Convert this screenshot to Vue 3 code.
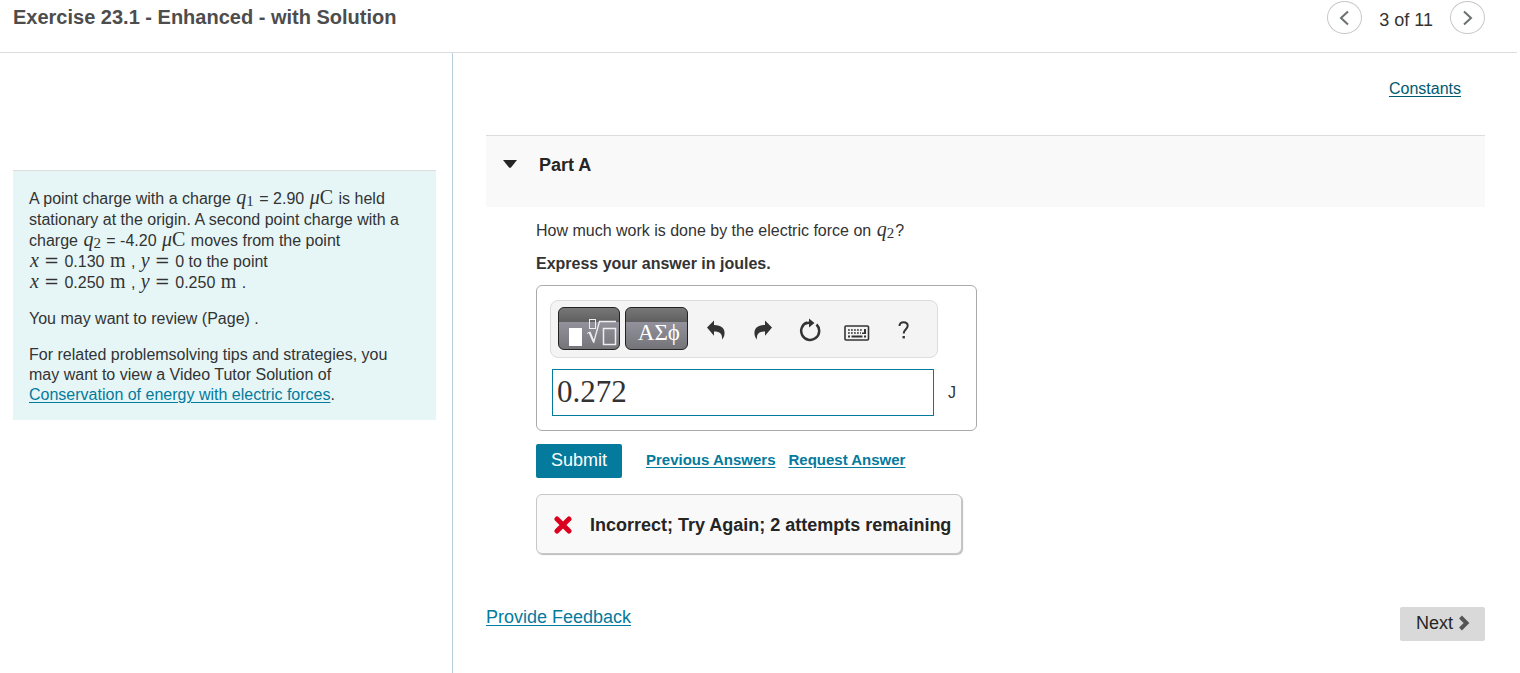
<template>
  <div class="page">
    <header class="top-bar">
      <h1>Exercise 23.1 - Enhanced - with Solution</h1>
      <nav class="pager" aria-label="Exercise navigation">
        <button class="pager-btn" type="button" aria-label="Previous item">
          <svg width="11" height="16" viewBox="0 0 11 16"><path d="M9 1.500 2 8l7 6.500" /></svg>
        </button>
        <span class="pager-label">{{ current }} of {{ total }}</span>
        <button class="pager-btn" type="button" aria-label="Next item">
          <svg width="11" height="16" viewBox="0 0 11 16"><path d="M2 1.500 9 8l-7 6.500" /></svg>
        </button>
      </nav>
    </header>

    <div class="columns">
      <aside class="side">
        <section class="problem">
          <p class="statement">
            A point charge with a charge <span class="math"><i>q</i><sub>1</sub></span> = 2.90 <span class="math"><i>μ</i>C</span> is held
            stationary at the origin. A second point charge with a
            charge <span class="math"><i>q</i><sub>2</sub></span> = -4.20 <span class="math"><i>μ</i>C</span> moves from the point<br>
            <span class="math"><i>x</i> <span class="eq">=</span></span> 0.130 <span class="math">m</span> , <span class="math"><i>y</i> <span class="eq">=</span></span> 0 to the point<br>
            <span class="math"><i>x</i> <span class="eq">=</span></span> 0.250 <span class="math">m</span> , <span class="math"><i>y</i> <span class="eq">=</span></span> 0.250 <span class="math">m</span> .
          </p>
          <p>You may want to review (Page) .</p>
          <p>
            For related problemsolving tips and strategies, you
            may want to view a Video Tutor Solution of
            <a href="#">Conservation of energy with electric forces</a>.
          </p>
        </section>
      </aside>

      <main class="content">
        <a class="constants" href="#">Constants</a>

        <button class="part-header" type="button" :aria-expanded="open" @click="open = !open">
          <svg width="14" height="8" viewBox="0 0 14 8"><path d="M0 0h14L8 7.4q-1 .8-2 0z" /></svg>
          <span>Part A</span>
        </button>

        <div v-show="open" class="part-body">
          <p class="question">How much work is done by the electric force on <span class="math"><i>q</i><sub>2</sub></span>?</p>
          <label class="instruction" for="answer">Express your answer in joules.</label>

          <div class="answer-box">
            <div class="toolbar">
              <button class="palette" type="button" aria-label="Templates">
                <svg width="48" height="28" viewBox="0 0 48 28">
                  <rect x="0" y="9" width="13" height="18" fill="#fff" />
                  <g fill="none" stroke="#eee">
                    <rect x="20.500" y=".5" width="6" height="9" />
                    <path d="M18 14.500l3-1.500" />
                    <path d="M20.500 13l4 9.500" stroke-width="2" />
                    <path d="M24.500 24 30.500 2.500h16.500" stroke-width="1.300" />
                    <rect x="34.500" y="9.500" width="12" height="16" stroke-width="1.500" />
                  </g>
                </svg>
              </button>
              <button class="palette greek" type="button" aria-label="Symbols">ΑΣϕ</button>
              <div class="tools">
                <button type="button" aria-label="Undo">
                  <svg width="18" height="20" viewBox="0 0 18 20"><path d="M0 7.500 7 .5V5c7.500 0 11 3.500 10.500 9-.1 2-1 4-2.500 5.500.6-5.500-2-8-8-8v4.200z" /></svg>
                </button>
                <button type="button" aria-label="Redo">
                  <svg width="18" height="20" viewBox="0 0 18 20"><path d="M18 7.500 11 .5V5C3.500 5 0 8.500.5 14c.1 2 1 4 2.500 5.500-.6-5.500 2-8 8-8v4.200z" /></svg>
                </button>
                <button type="button" aria-label="Reset">
                  <svg width="22" height="24" viewBox="0 0 22 24">
                    <path d="M8 4.500a9 9 0 1 0 9.500 2" fill="none" stroke="#333" stroke-width="2.500" />
                    <path d="M10 .5 15.500 5 10 9.500V6L7 6.500V4l3-.5z" />
                  </svg>
                </button>
                <button class="keyboard" type="button" aria-label="Keyboard shortcuts">
                  <svg width="26" height="16" viewBox="0 0 26 16">
                    <rect x="1" y="1" width="23.500" height="14" rx="1" fill="none" stroke="#333" stroke-width="1.600" />
                    <path d="M4 5h15M4 8h13" fill="none" stroke="#333" stroke-width="1.500" stroke-dasharray="1.800 1.200" />
                    <path d="M20 4h2v5h-4V7.500h2zM4 10.500h2v2H4zM7.500 10.500h11v2h-11zM20 10.500h2v2h-2z" />
                  </svg>
                </button>
                <button type="button" aria-label="Help">
                  <svg width="12" height="18" viewBox="0 0 12 18">
                    <path d="M1.500 5C1.500 2.500 3 1.200 5.500 1.200s4.200 1.300 4.200 3.600c0 3.200-4 3.700-4 7.700" fill="none" stroke="#333" stroke-width="2" />
                    <path d="M4.500 15h2.400v2.400H4.500z" />
                  </svg>
                </button>
              </div>
            </div>
            <div class="answer-row">
              <input id="answer" v-model="answer" type="text" autocomplete="off">
              <span class="answer-unit">J</span>
            </div>
          </div>

          <div class="actions">
            <button class="submit" type="button">Submit</button>
            <a href="#">Previous Answers</a>
            <a href="#">Request Answer</a>
          </div>

          <div class="feedback" role="status">
            <svg width="18" height="18" viewBox="0 0 18 18"><path d="M3 3l12 12M15 3L3 15" /></svg>
            <span>Incorrect; Try Again; 2 attempts remaining</span>
          </div>
        </div>

        <footer class="bottom">
          <a href="#">Provide Feedback</a>
          <button class="next" type="button">
            Next
            <svg width="12" height="16" viewBox="0 0 12 16"><path d="M2.500 2 8.500 8l-6 6" /></svg>
          </button>
        </footer>
      </main>
    </div>
  </div>
</template>

<script setup>
import { ref } from 'vue'

const current = 3
const total = 11
const open = ref(true)
const answer = ref('0.272')
</script>

<style>
body { margin: 0; background: #fff; }
</style>

<style scoped>
.page {
  min-height: 100vh; display: flex; flex-direction: column;
  font: 16px/20px "Liberation Sans", Arial, sans-serif; color: #333;
}
h1, p { margin: 0; }
button { font-family: inherit; cursor: pointer; }
a { color: #047a9c; text-underline-offset: 2px; }

/* Header */
.top-bar {
  display: flex; justify-content: space-between; align-items: flex-start;
  height: 52px; margin-right: 3px; padding: 0 32px 0 13px;
  border-bottom: 1px solid #ddd;
}
h1 { font-size: 20px; line-height: 24px; padding-top: 5px; color: #4d4d4d; }
.pager { display: flex; align-items: center; gap: 17px; padding-top: 1px; }
.pager-btn {
  display: flex; align-items: center; justify-content: center;
  width: 35px; height: 33px; padding: 0;
  border: 1px solid #c7c7c7; border-radius: 50%; background: #fff;
}
.pager-btn path { fill: none; stroke: #6a7070; stroke-width: 2; }
.pager-label { font-size: 18px; padding-top: 4px; }

.columns { display: flex; flex: 1; }

/* Problem statement */
.side {
  flex: 0 0 29.8%; box-sizing: border-box;
  padding: 117px 16px 0 13px; border-right: 1px solid #b8cfe0;
}
.problem {
  display: flex; flex-direction: column; gap: 16px;
  padding: 17px 16px 15px; background: #e6f6f7; border-top: 1px solid #ddd;
}
.statement { line-height: 21px; }
.math { font-family: "Liberation Serif", serif; font-size: 20px; line-height: 16px; white-space: nowrap; padding: 0 1px; }
.math sub { font-size: 15px; line-height: 0; vertical-align: -2px; }
.eq { font-family: "DejaVu Serif", serif; font-size: 18px; }

/* Part A */
.content { flex: 1; display: flex; flex-direction: column; align-items: stretch; padding: 26px 35px 32px 33px; }
.constants { align-self: flex-end; margin-right: 24px; color: #005a70; }
.part-header {
  display: flex; align-items: flex-start; gap: 22px;
  height: 72px; margin-top: 36px; padding: 19px 17px 0;
  border: 0; border-top: 1px solid #ddd; background: #f9f9f9;
  font-size: 18px; line-height: 20px; font-weight: bold; color: #252525;
}
.part-header svg { margin-top: 5px; fill: #252525; }
.part-body { display: flex; flex-direction: column; align-items: flex-start; padding: 14px 0 0 50px; }
.instruction { margin-top: 13px; font-weight: bold; }

.answer-box {
  margin-top: 11px; padding: 14px 13px; box-sizing: border-box;
  width: 441px; max-width: 100%;
  border: 1px solid #aaa; border-radius: 6px;
}
.toolbar {
  display: flex; align-items: center; gap: 5px; box-sizing: border-box;
  width: 388px; height: 58px; padding: 0 9px 0 7px;
  border: 1px solid #ddd; border-radius: 8px; background: #f4f4f4;
}
.palette {
  display: flex; align-items: flex-end; justify-content: flex-end;
  width: 62px; height: 43px; padding: 0 2px 2px 0; margin-bottom: 2px;
  border: 1px solid #222; border-radius: 6px;
  background: linear-gradient(#777, #606060 34%, #93929c 35%, #747479);
}
.greek {
  width: 63px; padding: 0 7px 2px 0;
  font-family: "Liberation Serif", serif; font-size: 23px; line-height: 28px; color: #fff;
}
.tools { flex: 1; display: grid; grid-template-columns: repeat(5, 1fr); align-items: center; padding-top: 2px; }
.tools button { display: flex; justify-content: center; padding: 0; border: 0; background: none; }
.tools svg { fill: #333; }
.tools .keyboard { padding-top: 5px; }
.answer-row { display: flex; align-items: center; gap: 14px; margin-top: 11px; padding-left: 2px; }
.answer-row input {
  box-sizing: border-box; width: 382px; height: 47px; padding: 0 4px 2px;
  border: 1px solid #047a9c; outline: 0; background: #fff;
  font-family: "Liberation Serif", serif; font-size: 31px; color: #333;
}

.actions { display: flex; align-items: center; margin-top: 13px; font-size: 15px; font-weight: bold; }
.actions a { margin-right: 13px; padding-bottom: 2px; }
.submit {
  height: 34px; margin-right: 24px; padding: 0 15px 2px;
  border: 0; border-radius: 2px; background: #047a9c; font-size: 18px; color: #fff;
}
.feedback {
  display: flex; align-items: center; gap: 18px; height: 56px;
  margin-top: 16px; padding: 2px 10px 0 17px;
  border: 1px solid #c7c7c7; border-radius: 6px; background: #f9f9f9;
  box-shadow: 1px 1px 1px #bbb;
  font-size: 18px; font-weight: bold; color: #252525;
}
.feedback path { stroke: #db0020; stroke-width: 5; stroke-linecap: round; }

.bottom { display: flex; justify-content: space-between; align-items: flex-start; margin-top: 53px; font-size: 18px; }
.next {
  display: flex; align-items: center; gap: 5px; height: 34px; padding: 0 15px 2px 16px;
  border: 0; border-radius: 2px; background: #d9d9d9; font-size: 18px; color: #252525;
}
.next path { fill: none; stroke: #555; stroke-width: 4; }
</style>
